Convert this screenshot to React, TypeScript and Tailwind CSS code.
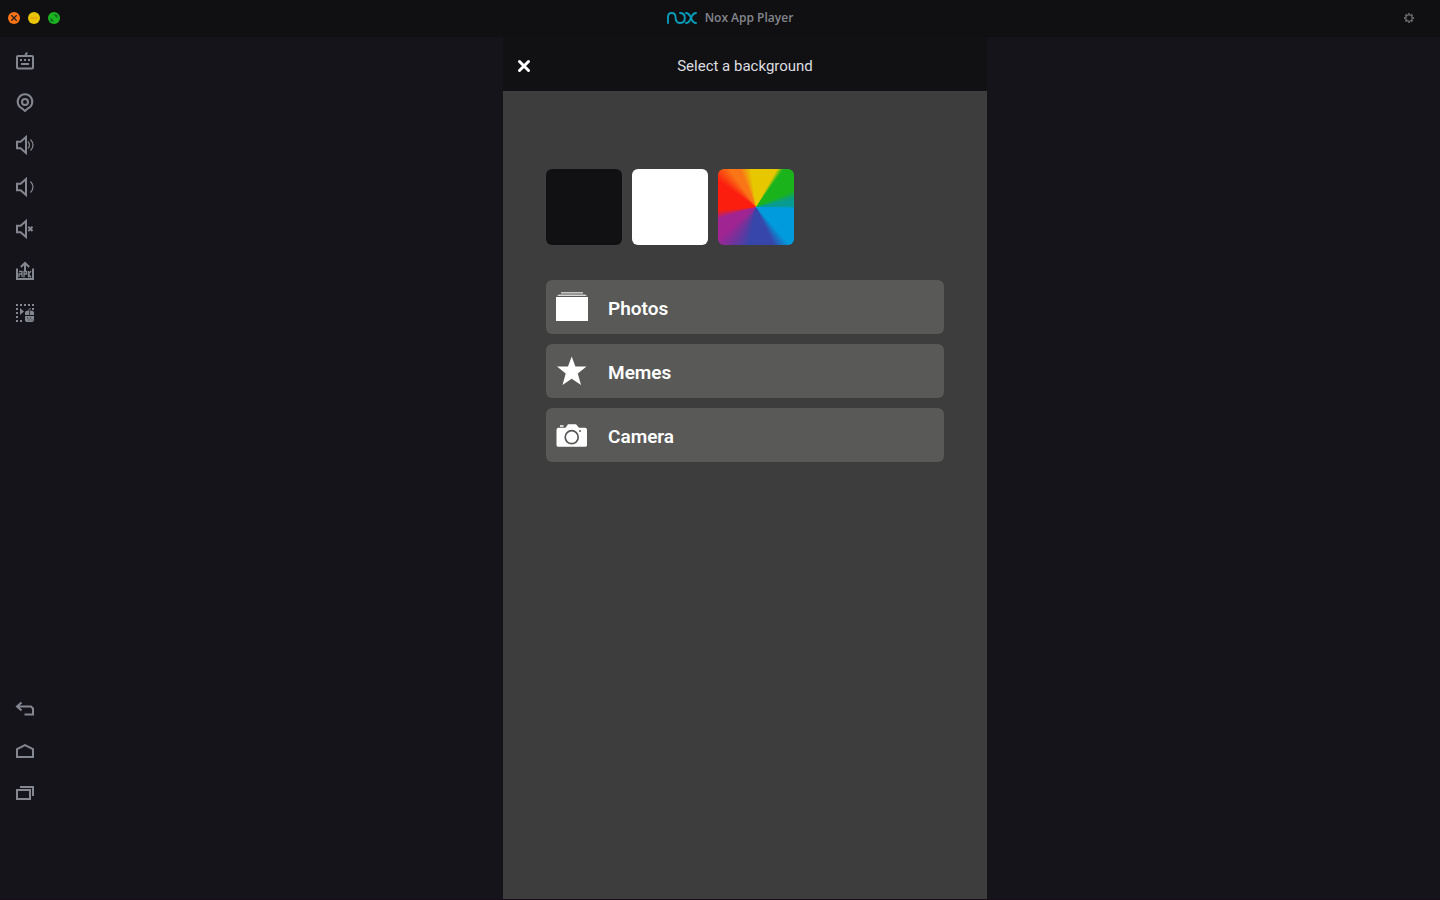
import React from "react";

type IconProps = { children: React.ReactNode };

function Glyph({ children }: IconProps) {
  return (
    <svg viewBox="0 0 20 20" className="size-5" fill="none" stroke="currentColor" strokeWidth="2" aria-hidden="true">
      {children}
    </svg>
  );
}

const speaker = <path d="M2 6.700h3.600L11 2v16l-5.400-4.700H2z" />;

const tools = [
  {
    label: "Keyboard control",
    icon: (
      <Glyph>
        <rect x="2" y="5" width="16" height="12.500" rx="1" />
        <path d="M10 5l2-3.500" />
        <path d="M5 9h2M9 9h2M13 9h2M6 13h8" strokeWidth="2" />
      </Glyph>
    ),
  },
  {
    label: "Location",
    icon: (
      <Glyph>
        <path d="M10 18l-3-2.700a7.300 7.300 0 1 1 6 0z" />
        <circle cx="10" cy="9" r="3" strokeWidth="2" />
      </Glyph>
    ),
  },
  {
    label: "Volume up",
    icon: (
      <Glyph>
        {speaker}
        <path d="M13 6.500q3 3.500 0 7M15.500 4.500q5 5.500 0 11" strokeWidth="1.200" />
      </Glyph>
    ),
  },
  {
    label: "Volume down",
    icon: (
      <Glyph>
        {speaker}
        <path d="M15.500 4.500q5 5.500 0 11" strokeWidth="1.200" />
      </Glyph>
    ),
  },
  {
    label: "Mute",
    icon: (
      <Glyph>
        {speaker}
        <path d="M13.300 7.800l4.200 4.200M17.500 7.800L13.300 12" />
      </Glyph>
    ),
  },
  {
    label: "Install APK",
    icon: (
      <Glyph>
        <path d="M2 7.500V18h16V7.500" />
        <path d="M10 10V2.500M5.800 6L10 2l4.200 4" />
        <path d="M4 10.500h3v5.500M4 16v-3H7M9 16.500v-6h2.500v2.500H9M13.500 10v6.500M16 10l-2.500 3L16 16.500" strokeWidth="1.300" />
      </Glyph>
    ),
  },
  {
    label: "Macro recorder",
    icon: (
      <Glyph>
        <path d="M1 2h18" strokeDasharray="2 2" />
        <path d="M2 5v14M18 5v2" strokeDasharray="2 2" />
        <path d="M5 18h3" strokeDasharray="2 2" />
        <path d="M5 5l4 3.500L5 12z" fill="currentColor" stroke="none" />
        <path d="M10 12V9.500q0-2 4-2V12zM14.700 12V7.500q4.300 0 4.300 2V12zM10 13h9v4q0 2-2 2h-5q-2 0-2-2z" fill="currentColor" stroke="none" />
        <path d="M13.800 7.500q0-2 2-2" strokeWidth="1" />
        <path d="M12 15h1M15 15h1M13.500 17h1M16.500 17h1" stroke="#15141a" strokeWidth="1" />
      </Glyph>
    ),
  },
];

const navigation = [
  {
    label: "Back",
    icon: (
      <Glyph>
        <path d="M6.500 3.500L2 7.500l4.500 4M2 7.500h14l2 2v6H9.500" />
      </Glyph>
    ),
  },
  {
    label: "Home",
    icon: (
      <Glyph>
        <path d="M2 16V8l8-4 8 4v8z" />
      </Glyph>
    ),
  },
  {
    label: "Recent apps",
    icon: (
      <Glyph>
        <rect x="2" y="7" width="13" height="9" />
        <path d="M5 4h13v9" />
      </Glyph>
    ),
  },
];

const sources = [
  {
    label: "Photos",
    icon: (
      <svg viewBox="0 0 32 32" className="size-8" fill="#fff" aria-hidden="true">
        <path d="M5 1h22v1.600H5z" opacity=".65" />
        <path d="M3 3.400h26L31 5H1z" opacity=".75" />
        <path d="M0 6h32v24H0z" />
      </svg>
    ),
  },
  {
    label: "Memes",
    icon: (
      <svg viewBox="0 0 32 32" className="size-8" fill="#fff" aria-hidden="true">
        <path d="M15.700 1.500l3.700 10H30.500l-8.700 7L25 30l-9.300-6.300L6.500 30l3.200-11.500L1 11.500h11z" />
      </svg>
    ),
  },
  {
    label: "Camera",
    icon: (
      <svg viewBox="0 0 32 32" className="size-8" aria-hidden="true">
        <path d="M2.500 8.700h7L12 5.200h8l3 3.500h6q2 0 2 2v15.500q0 1.500-2 1.500H2.500Q.5 27.700.5 26.200V10.700q0-2 2-2zM4 6.300h3.500v1.400H4z" fill="#fff" />
        <circle cx="15.700" cy="18.200" r="6.500" fill="#fff" stroke="#595957" strokeWidth="1.700" />
        <circle cx="24" cy="12" r="1" fill="#595957" />
      </svg>
    ),
  },
];

function SideButton({ label, icon }: { label: string; icon: React.ReactNode }) {
  return (
    <button type="button" aria-label={label} className="text-[#858790]">
      {icon}
    </button>
  );
}

function TitleBar() {
  return (
    <header className="grid h-[37px] grid-cols-3 items-center bg-[#101012] px-2 pb-[2px]">
      <div className="flex gap-2">
        <button type="button" aria-label="Close window">
          <svg viewBox="0 0 12 12" className="size-3" fill="none">
            <circle cx="6" cy="6" r="6" fill="#fb7417" />
            <path d="M3.300 3.300l5.400 5.400M8.700 3.300L3.300 8.700" stroke="#29211f" strokeWidth="1.300" />
          </svg>
        </button>
        <button type="button" aria-label="Minimize window">
          <svg viewBox="0 0 12 12" className="size-3" fill="none">
            <circle cx="6" cy="6" r="6" fill="#e8c506" />
            <path d="M2.500 6h7" stroke="#f49a12" strokeWidth="1.200" />
          </svg>
        </button>
        <button type="button" aria-label="Zoom window">
          <svg viewBox="0 0 12 12" className="size-3">
            <circle cx="6" cy="6" r="6" fill="#1cb51f" />
            <path d="M5.500 2.500H9.500v4zM2.500 5.500v4h4z" fill="#0a6c26" />
          </svg>
        </button>
      </div>
      <div className="flex items-center justify-center gap-2 pl-5">
        <svg viewBox="0 0 30 12" className="h-3 w-[30px]" fill="none" stroke="#069cba" strokeWidth="1.900" strokeLinecap="round" aria-hidden="true">
          <path d="M1 11V5Q1 1 4.700 1T8.500 5C8.500 9 10 11 13 11S17.800 9 17.800 6 16 1 13 1" />
          <path d="M19 1C22.500 1 22.500 3.500 24 6S25.500 11 29 11M29 1C25.500 1 25.500 3.500 24 6S22.500 11 19 11" />
        </svg>
        <h1 className="font-['Open_Sans',sans-serif] text-xs leading-4 font-semibold whitespace-nowrap text-[#85868d]">Nox App Player</h1>
      </div>
      <button type="button" aria-label="Settings" className="mr-[17px] justify-self-end">
        <svg viewBox="0 0 12 12" className="size-3" fill="none" stroke="#69696d" aria-hidden="true">
          <circle cx="6" cy="6" r="3.200" strokeWidth="1.300" />
          <path d="M6 1v1.500M6 9.500V11M1 6h1.500M9.500 6H11M2.500 2.500l1 1M8.500 8.500l1 1M9.500 2.500l-1 1M3.500 8.500l-1 1" strokeWidth="1.800" />
        </svg>
      </button>
    </header>
  );
}

export default function App() {
  return (
    <div className="flex min-h-screen flex-col border-b border-[#170d18] bg-[#15141a] font-['Roboto',sans-serif]">
      <TitleBar />
      <div className="flex flex-1">
        <aside className="flex w-[50px] flex-col items-center justify-between pt-[14px] pb-24">
          <nav aria-label="Tools" className="flex flex-col gap-[22px]">
            {tools.map((tool) => (
              <SideButton key={tool.label} {...tool} />
            ))}
          </nav>
          <nav aria-label="Navigation" className="flex flex-col gap-[22px]">
            {navigation.map((item) => (
              <SideButton key={item.label} {...item} />
            ))}
          </nav>
        </aside>
        <div className="flex flex-1 justify-center">
          <main className="flex w-full max-w-[484px] flex-col bg-[#3d3d3d]">
            <div className="grid h-[54px] grid-cols-[1fr_auto_1fr] items-center bg-[#111113] px-[14px] pt-1">
              <button type="button" aria-label="Close" className="justify-self-start">
                <svg viewBox="0 0 14 14" className="size-[14px]" fill="none" stroke="#fff" strokeWidth="3" strokeLinecap="round">
                  <path d="M2.500 2.500l9 9M11.500 2.500l-9 9" />
                </svg>
              </button>
              <h2 className="text-[15px] leading-5 text-[#dddde0]">Select a background</h2>
            </div>
            <div className="flex flex-col gap-[35px] px-[43px] pt-[78px]">
              <div className="flex gap-[10px]">
                <button type="button" aria-label="Black background" className="size-[76px] rounded-md bg-[#111113]" />
                <button type="button" aria-label="White background" className="size-[76px] rounded-md bg-white" />
                <button
                  type="button"
                  aria-label="Choose a color"
                  className="size-[76px] rounded-md bg-[conic-gradient(#e6c700_0deg,#e6c700_29deg,#1bb31c_36deg,#1bb31c_66deg,#079b91_79deg,#079b91_88deg,#009bdc_92deg,#009bdc_138deg,#3646aa_155deg,#3646aa_190deg,#a02491_230deg,#a02491_253deg,#fb1d0e_265deg,#fb1d0e_305deg,#fa7516_325deg,#fa7516_337deg,#e6c700_352deg)]"
                />
              </div>
              <div className="flex flex-col gap-[10px]">
                {sources.map(({ label, icon }) => (
                  <button
                    key={label}
                    type="button"
                    className="flex h-[54px] items-center gap-5 rounded-md bg-[#595957] px-[10px] text-left text-[19px] leading-6 font-semibold text-white"
                  >
                    {icon}
                    <span className="pt-1">{label}</span>
                  </button>
                ))}
              </div>
            </div>
          </main>
        </div>
      </div>
    </div>
  );
}
